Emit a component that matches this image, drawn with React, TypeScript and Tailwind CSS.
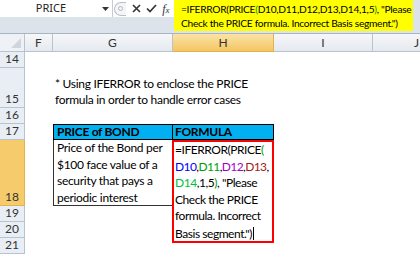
import React from "react";

const FONT = "font-['Lato','Open_Sans',sans-serif]";
const CELL_TEXT = "text-[12px] tracking-[-0.3px] text-black";

function FormulaBar() {
  return (
    <div className="flex h-[34px] border-b border-[#aab4c0] bg-[#dde3ea]">
      {/* name box + buttons */}
      <div className="flex w-[174px] flex-col">
        <div className="flex h-[17px] items-center bg-white">
          <div className="flex h-full w-[113px] items-center border-r border-[#c5ccd5]">
            <span className="flex-1 text-center font-['Noto_Sans',sans-serif] text-[11px] text-[#222]">
              PRICE
            </span>
            <svg width="7" height="4" viewBox="0 0 7 4" className="mr-[3px]">
              <path d="M0 0h7L3.5 4z" fill="#333" />
            </svg>
          </div>
          <div className="ml-[1px] flex h-[14px] w-[12px] items-center justify-center rounded-l-full border border-r-0 border-[#b6bec8] bg-[#f3f5f8]">
            <div className="h-[5px] w-[5px] rounded-full border border-[#aeb6c0]" />
          </div>
          <div className="flex flex-1 items-center justify-around pl-[4px] pr-[2px]">
            <svg width="9" height="9" viewBox="0 0 9 9">
              <path d="M1 1l7 7M8 1L1 8" stroke="#333" strokeWidth="1.6" />
            </svg>
            <svg width="11" height="9" viewBox="0 0 11 9">
              <path d="M1 4.5l3 3L10 1" stroke="#333" strokeWidth="1.7" fill="none" />
            </svg>
            <span className="font-['Liberation_Serif',serif] text-[12px] italic text-[#333]">
              f<span className="text-[9px]">x</span>
            </span>
          </div>
        </div>
      </div>
      {/* expanded formula */}
      <div
        className={`h-[31px] w-[239px] bg-[#ffff00] pl-[7px] pt-[2px] text-[10.2px] leading-[14px] tracking-[-0.3px] text-black ${FONT}`}
      >
        <div className="whitespace-nowrap">
          =IFERROR(PRICE<span className="text-[#00a000]">(</span>D10,D11,D12,D13,D14,1,5
          <span className="text-[#00a000]">)</span>, "Please
        </div>
        <div className="whitespace-nowrap">Check the PRICE formula. Incorrect Basis segment.")</div>
      </div>
      <div className="flex-1" />
    </div>
  );
}

const colHead = "flex items-center justify-center border-r border-b border-[#b8c3d0] text-[12px] text-[#333]";
const rowHead = "flex items-end justify-center border-r border-b border-[#b8c3d0] bg-[#e9eef4] pb-[1px] text-[12px] leading-[14px] text-[#333]";

export default function App() {
  return (
    <div className={`h-[254px] w-[420px] overflow-hidden bg-white ${FONT}`}>
      <FormulaBar />
      <div className="grid grid-cols-[25px_28px_120px_101px_99px_47px] grid-rows-[18px_16px_40px_16px_16px_66px_16px_16px_16px]">
        {/* column headers */}
        <div className={`${colHead} relative bg-[#eef1f5]`}>
          <svg width="10" height="10" viewBox="0 0 10 10" className="absolute bottom-[3px] right-[3px]">
            <path d="M10 0v10H0z" fill="#d0d5db" />
          </svg>
        </div>
        <div className={`${colHead} bg-gradient-to-b from-[#f6f7f9] to-[#e5e9ee]`}>F</div>
        <div className={`${colHead} bg-gradient-to-b from-[#f6f7f9] to-[#e5e9ee]`}>G</div>
        <div className={`${colHead} bg-gradient-to-b from-[#fbe3a6] to-[#f4c660] border-[#e2b24e]`}>H</div>
        <div className={`${colHead} bg-gradient-to-b from-[#f6f7f9] to-[#e5e9ee]`}>I</div>
        <div className={`${colHead} justify-end pr-[1px] bg-gradient-to-b from-[#f6f7f9] to-[#e5e9ee] border-r-0`}>J</div>

        {/* row 14 */}
        <div className={rowHead}>14</div>
        <div className="col-span-5" />

        {/* row 15 */}
        <div className={rowHead}>15</div>
        <div />
        <div className={`col-span-4 flex flex-col justify-end pl-[2px] leading-[16px] ${CELL_TEXT}`}>
          <div className="whitespace-nowrap">* Using IFERROR to enclose the PRICE</div>
          <div className="whitespace-nowrap">formula in order to handle error cases</div>
        </div>

        {/* row 16 */}
        <div className={rowHead}>16</div>
        <div className="col-span-5" />

        {/* row 17 */}
        <div className={rowHead}>17</div>
        <div />
        <div className={`border border-black bg-[#00b0f0] pl-[3px] font-bold leading-[14px] ${CELL_TEXT}`}>
          PRICE of BOND
        </div>
        <div className={`border border-l-0 border-black bg-[#00b0f0] pl-[2px] font-bold leading-[14px] ${CELL_TEXT}`}>
          FORMULA
        </div>
        <div className="col-span-2" />

        {/* row 18 */}
        <div className={`${rowHead} bg-[#f6cb6c] border-[#e2b24e]`}>18</div>
        <div />
        <div className={`whitespace-nowrap border border-t-0 border-[#333] pl-[3px] leading-[16.5px] ${CELL_TEXT}`}>
          <div>Price of the Bond per</div>
          <div>$100 face value of a</div>
          <div>security that pays a</div>
          <div>periodic interest</div>
        </div>
        <div className="relative">
          {/* cell in edit mode, spilling below its row */}
          <div className="absolute left-[-1px] top-[0px] z-10 h-[103px] w-[102px] whitespace-nowrap border-2 border-[#ff0000] bg-white pl-[1px] text-[12px] leading-[16.6px] tracking-[-0.45px] text-black">
            <div>
              =IFERROR(PRICE<span className="text-[#00a000]">(</span>
            </div>
            <div className="tracking-[-0.6px]">
              <span className="text-[#0000ff]">D10</span>,<span className="text-[#00a000]">D11</span>,
              <span className="text-[#a000c8]">D12</span>,<span className="text-[#a02020]">D13</span>,
            </div>
            <div>
              <span className="text-[#00c040]">D14</span>,1,5<span className="text-[#00a000]">)</span>, "Please
            </div>
            <div>Check the PRICE</div>
            <div>formula. Incorrect</div>
            <div>
              Basis segment.")<span className="ml-[1px] inline-block h-[13px] w-[1px] translate-y-[2px] bg-black" />
            </div>
          </div>
        </div>
        <div className="col-span-2" />

        {/* rows 19-21 */}
        <div className={rowHead}>19</div>
        <div className="col-span-5" />
        <div className={rowHead}>20</div>
        <div className="col-span-5" />
        <div className={rowHead}>21</div>
        <div className="col-span-5" />
      </div>
    </div>
  );
}
